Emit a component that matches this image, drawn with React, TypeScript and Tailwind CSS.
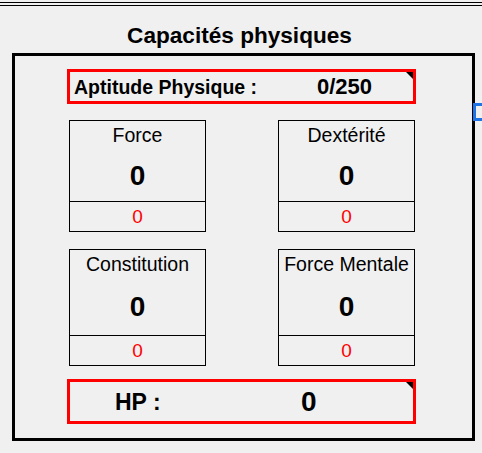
import React from 'react';

interface StatCardProps {
  label: string;
  value: number;
  bonus: number;
  topHeight: string;
}

const StatCard: React.FC<StatCardProps> = ({ label, value, bonus, topHeight }) => {
  return (
    <div className="w-[137px] border border-black flex flex-col">
      <div className={`${topHeight} flex flex-col border-b border-black`}>
        <div className="pt-[3px] text-[19.5px] leading-[22px] text-center text-black whitespace-nowrap">
          {label}
        </div>
        <div className="flex-1 flex items-center justify-center pt-[4px] text-[28px] leading-[32px] font-bold text-black">
          {value}
        </div>
      </div>
      <div className="h-[29px] flex items-center justify-center text-[19px] leading-[20px] text-[#ff0000]">
        {bonus}
      </div>
    </div>
  );
};

const Corner = () => (
  <div className="absolute top-0 right-0 w-0 h-0 border-l-[7px] border-l-transparent border-t-[7px] border-t-black" />
);

export default function App() {
  const stats = {
    force: 0,
    dexterite: 0,
    constitution: 0,
    forceMentale: 0,
  };

  return (
    <div
      className="relative w-[482px] h-[453px] overflow-hidden bg-[#f0f0f0] text-black"
      style={{ fontFamily: '"Liberation Sans", Arial, sans-serif' }}
    >
      {/* double line along the top */}
      <div className="mt-[2px] h-[4px] border-y border-black" />

      <h1 className="mt-[17px] pr-[3px] text-center text-[22.6px] leading-[26px] font-bold">
        Capacités physiques
      </h1>

      <div className="ml-[12px] mt-[4px] w-[463px] h-[388px] border-[3px] border-black">
        {/* aptitude */}
        <div className="relative ml-[52px] mt-[13px] w-[349px] h-[35px] border-[3px] border-[#ff0000] flex items-center">
          <span className="w-[247px] pl-[4px] text-[19.5px] leading-[22px] font-bold whitespace-nowrap">
            Aptitude Physique :
          </span>
          <span className="text-[22px] leading-[25px] font-bold">0/250</span>
          <Corner />
        </div>

        <div className="ml-[54px] mt-[16px] flex gap-[72px]">
          <StatCard label="Force" value={stats.force} bonus={0} topHeight="h-[81px]" />
          <StatCard label="Dextérité" value={stats.dexterite} bonus={0} topHeight="h-[81px]" />
        </div>
        <div className="ml-[54px] mt-[17px] flex gap-[72px]">
          <StatCard label="Constitution" value={stats.constitution} bonus={0} topHeight="h-[86px]" />
          <StatCard label="Force Mentale" value={stats.forceMentale} bonus={0} topHeight="h-[86px]" />
        </div>

        {/* hp */}
        <div className="relative ml-[52px] mt-[13px] w-[349px] h-[45px] border-[3px] border-[#ff0000] flex items-center">
          <span className="w-[231px] pl-[45px] text-[23px] leading-[26px] font-bold whitespace-nowrap">
            HP :
          </span>
          <span className="text-[28px] leading-[32px] font-bold">0</span>
          <Corner />
        </div>
      </div>

      {/* selection handle poking in from the right */}
      <div className="absolute left-[473px] top-[103px] w-[14px] h-[18px] border-[3px] border-[#1e74e6] bg-[#f0f0f0]" />
    </div>
  );
}
